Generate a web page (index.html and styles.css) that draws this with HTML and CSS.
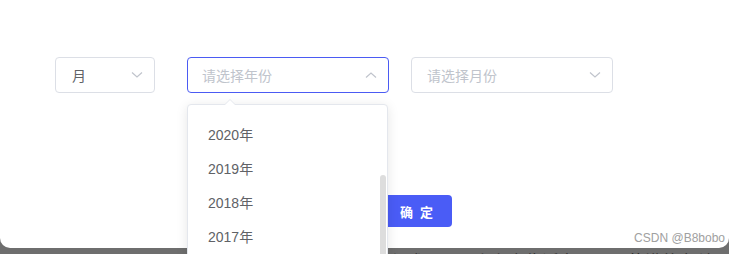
FILE: index.html
```html
<!DOCTYPE html>
<html lang="zh">
<head>
<meta charset="utf-8">
<link rel="stylesheet" href="styles.css">
</head>
<body>
<div class="page">
  <div class="backdrop-text">
    <span class="bt bt1">请程式-|</span>
    <span class="bt bt2">山东省临沂市理三县薄模范客科1678</span>
  </div>
  <div class="modal">
    <div class="row">
      <div class="select s1">
        <span class="value">月</span>
        <svg class="chev" width="12" height="8" viewBox="0 0 12 8"><polyline points="1,1.5 6,6 11,1.5" fill="none" stroke="#c0c4cc" stroke-width="1.2"/></svg>
      </div>
      <div class="select s2 focus">
        <span class="ph">请选择年份</span>
        <svg class="chev" width="12" height="8" viewBox="0 0 12 8"><polyline points="1,6.5 6,2 11,6.5" fill="none" stroke="#c0c4cc" stroke-width="1.2"/></svg>
      </div>
      <div class="select s3">
        <span class="ph">请选择月份</span>
        <svg class="chev" width="12" height="8" viewBox="0 0 12 8"><polyline points="1,1.5 6,6 11,1.5" fill="none" stroke="#c0c4cc" stroke-width="1.2"/></svg>
      </div>
    </div>
    <div class="footer">
      <button class="btn">确 定</button>
    </div>
    <div class="mark">CSDN @B8bobo</div>
  </div>
  <div class="dropdown">
    <div class="arrow"></div>
    <div class="scroll">
      <ul class="list">
        <li class="first">2021年</li>
        <li>2020年</li>
        <li>2019年</li>
        <li>2018年</li>
        <li>2017年</li>
        <li>2016年</li>
      </ul>
      <div class="thumb"></div>
    </div>
  </div>
</div>
</body>
</html>
```

FILE: styles.css
```css
html, body {
  margin: 0;
  padding: 0;
}
body {
  font-family: "Liberation Sans", "Noto Sans CJK SC", sans-serif;
  font-size: 14px;
  color: #606266;
}
.page {
  position: relative;
  width: 729px;
  height: 254px;
  overflow: hidden;
  background: #6e6e6e;
}
.backdrop-text {
  position: absolute;
  left: 0;
  top: 248px;
  width: 729px;
  height: 20px;
  font-size: 17px;
  color: #2a2a2a;
  white-space: nowrap;
}
.bt {
  position: absolute;
  top: 0;
}
.bt1 { left: 372px; }
.bt2 { left: 474px; }
.modal {
  position: relative;
  width: 729px;
  height: 248px;
  background: #fff;
  border-radius: 0 0 10px 10px;
  box-sizing: border-box;
  padding: 57px 0 0 55px;
}
.row {
  display: flex;
  align-items: center;
}
.select {
  box-sizing: border-box;
  height: 36px;
  border: 1px solid #dcdfe6;
  border-radius: 4px;
  display: flex;
  align-items: center;
  justify-content: space-between;
  padding: 0 11px 0 15px;
  background: #fff;
}
.s1 { width: 100px; margin-right: 32px; padding-left: 16px; }
.s2 { width: 202px; margin-right: 22px; padding-left: 14px; }
.s3 { width: 202px; }
.focus { border-color: #4b5bf3; }
.value { color: #606266; }
.ph { color: #c0c4cc; }
.chev { display: block; }
.footer {
  display: flex;
  padding: 102px 0 0 329px;
}
.btn {
  width: 68px;
  height: 32px;
  border: none;
  border-radius: 4px;
  background: #4a5cf6;
  color: #fff;
  font-family: "Noto Sans CJK SC", sans-serif;
  font-size: 13px;
  font-weight: 700;
  letter-spacing: 2px;
  padding: 0 0 0 16px;
  text-align: left;
}
.mark {
  position: absolute;
  right: 4px;
  bottom: 3px;
  font-size: 12px;
  color: #a0a0a0;
}
.dropdown {
  position: absolute;
  left: 187px;
  top: 104px;
  width: 201px;
  height: 170px;
  box-sizing: border-box;
  background: #fff;
  border: 1px solid #e4e7ed;
  border-radius: 4px;
  box-shadow: 0 2px 12px rgba(0, 0, 0, 0.1);
}
.arrow {
  position: absolute;
  left: 36px;
  top: -6px;
  width: 0;
  height: 0;
  border-left: 6px solid transparent;
  border-right: 6px solid transparent;
  border-bottom: 6px solid #e4e7ed;
}
.arrow::after {
  content: "";
  position: absolute;
  left: -5px;
  top: 1px;
  border-left: 5px solid transparent;
  border-right: 5px solid transparent;
  border-bottom: 5px solid #fff;
}
.scroll {
  position: relative;
  height: 100%;
  overflow: hidden;
}
.list {
  list-style: none;
  margin: -21px 0 0 0;
  padding: 0;
}
.list li {
  height: 34px;
  line-height: 34px;
  padding: 0 20px;
  color: #606266;
}
.list li.first {
  line-height: 24px;
}
.thumb {
  position: absolute;
  right: 1px;
  top: 70px;
  width: 6px;
  height: 120px;
  border-radius: 3px;
  background: #dddddd;
}
```
